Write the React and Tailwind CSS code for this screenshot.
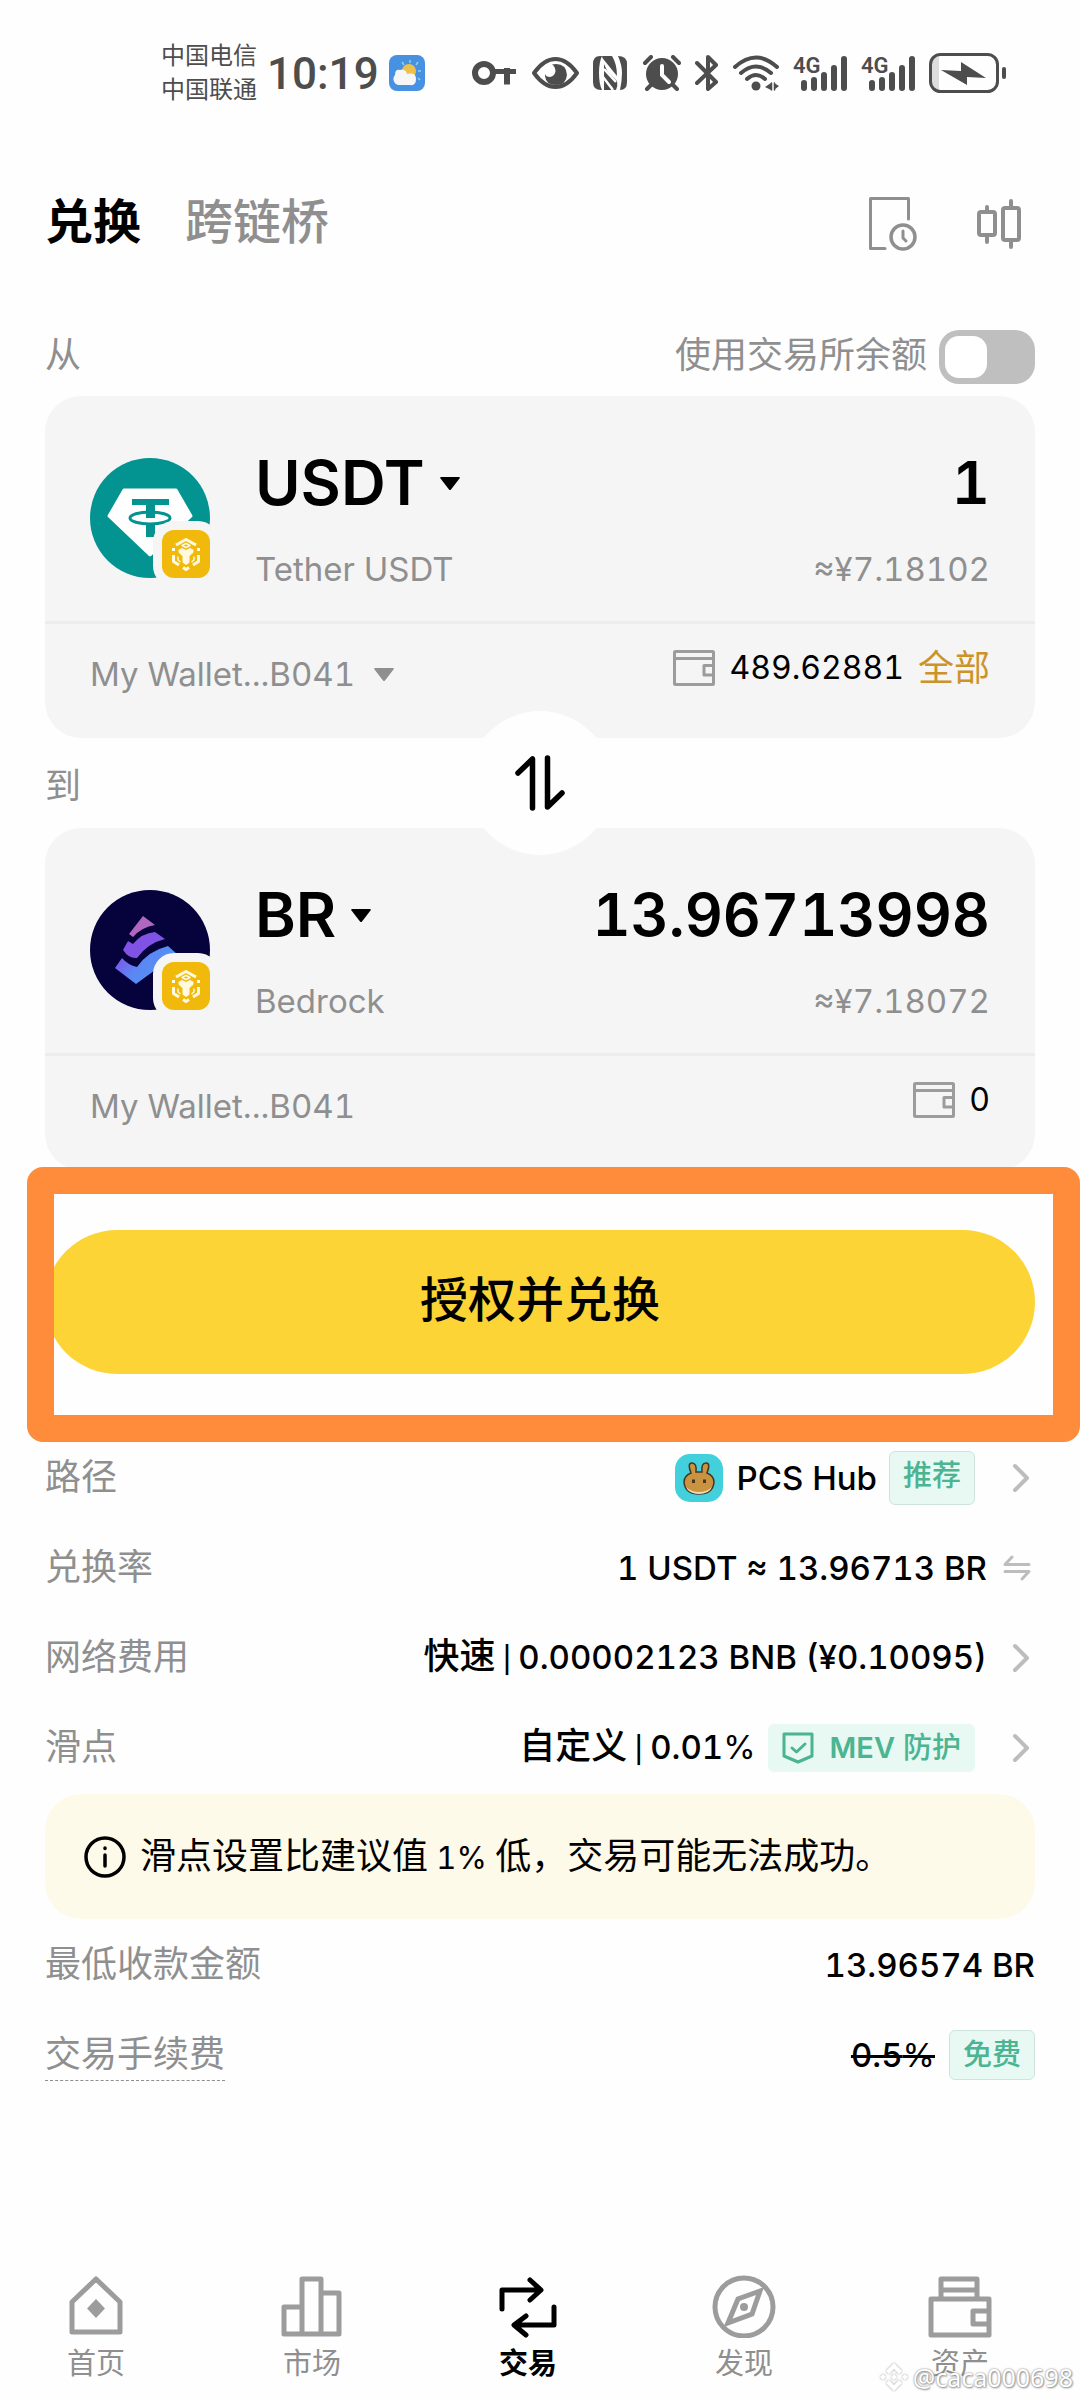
import React, { useState } from "react";

function StatusIcons() {
  return (
    <div className="flex items-center gap-[14px] text-[#4d4d4d]">
      <svg width="46" height="24" viewBox="0 0 46 24" fill="none" stroke="currentColor">
        <circle cx="12" cy="12" r="9" strokeWidth="6" />
        <path d="M23 10.500H44" strokeWidth="5" />
        <path d="M35 10V20.500" strokeWidth="6" strokeLinecap="square" />
      </svg>
      <svg width="47" height="32" viewBox="0 0 47 32">
        <path d="M2 16Q12 2 23.500 2T45 16Q35 30 23.500 30T2 16Z" fill="none" stroke="currentColor" strokeWidth="4" strokeLinejoin="round" />
        <path d="M20 7.500Q34 5 35 18Q34 28 24 28Q14 28 13 19V17Q14 20 18 20Q23 19 23.500 14Q23 9 20 7.500Z" fill="currentColor" />
      </svg>
      <svg width="36" height="34" viewBox="0 0 36 34" fill="currentColor">
        <path d="M7 0H9Q6 6 6 17T9 34H8Q0 34 0 26V8Q0 0 7 0Z" />
        <path d="M9 0H19Q24 8 24 20L11 4Q9 2 9 0Z" />
        <path d="M11 8V34H23Z" />
        <path d="M11 12L24 25Q25 30 23 34L11 20Z" />
        <path d="M11 13L23 26M10 21L20 34" stroke="#fff" strokeWidth="2.500" />
        <path d="M25 0Q34 0 34 8V26Q34 34 27 34Q29 25 29 17T25 0Z" />
      </svg>
      <svg width="38" height="36" viewBox="0 0 38 36" fill="none" stroke="currentColor" strokeLinecap="round">
        <circle cx="19" cy="19" r="16" fill="currentColor" stroke="none" />
        <path d="M2 8L8 2M36 8L30 2M8 30L4 34M30 30L34 34" strokeWidth="4" />
        <path d="M19 11V20L26 27" stroke="#fff" strokeWidth="4" />
      </svg>
      <svg width="24" height="36" viewBox="0 0 24 36" fill="none" stroke="currentColor" strokeWidth="4" strokeLinecap="round" strokeLinejoin="round">
        <path d="M2 8L21 27L13 34V2L21 10L2 28" />
      </svg>
      <svg width="46" height="36" viewBox="0 0 46 36" fill="none" stroke="currentColor" strokeLinecap="round" strokeWidth="4">
        <path d="M2 12Q23 -7 44 12M8 18Q23 5 38 18M14 24Q23 16 32 24" />
        <circle cx="23" cy="31" r="4.500" fill="currentColor" stroke="none" />
        <path d="M38 28V35L32 32ZM41 28V35L46 31Z" fill="currentColor" stroke="none" />
        <path d="M38.500 28V35M41.500 28V35" strokeWidth="1.500" />
      </svg>
      <Signal />
      <Signal />
      <svg width="77" height="40" viewBox="0 0 77 40">
        <path d="M10 3H8Q3 5 3 11V29Q3 35 10 37Z" fill="#ddd" />
        <rect x="1.500" y="1.500" width="67" height="37" rx="10" fill="none" stroke="currentColor" strokeWidth="3" />
        <path d="M12 17L32 18V9L57 25L38 24V32Z" fill="currentColor" />
        <rect x="73" y="14" width="4" height="12" rx="2" fill="currentColor" />
      </svg>
    </div>
  );
}

function Signal() {
  return (
    <svg width="54" height="48" viewBox="0 -6 54 48" fill="none" stroke="currentColor" strokeWidth="6" strokeLinecap="round">
      <text x="0" y="18" fill="currentColor" stroke="none" fontFamily="Roboto, sans-serif" fontSize="22" fontWeight="600">4G</text>
      <path d="M11 28V33M21 25V33M31 20V33M41 13V33M51 4V33" />
    </svg>
  );
}

function Weather() {
  return (
    <svg width="36" height="36" viewBox="0 0 36 36">
      <rect width="36" height="36" rx="8" fill="#4791e3" />
      <path d="M21 5V8M13 7L15 10M29 7L27 10M32 16H29M31 25L29 23" stroke="#8fd0dc" strokeWidth="1.500" />
      <circle cx="20" cy="16" r="7" fill="#edc24b" />
      <path d="M10 30A6 6 0 0 1 6 20Q6 14 11 15A5 5 0 0 1 18 19Q27 17 27 24T21 30Z" fill="#f6f6f6" />
    </svg>
  );
}

function ChainBadge() {
  return (
    <span className="absolute -right-[9px] -bottom-[9px] rounded-[21px] border-[9px] border-[#f5f5f5] bg-[#f5f5f5]">
      <svg width="48" height="48" viewBox="0 0 48 48" fill="none" stroke="#fff9e0" strokeWidth="3" strokeLinejoin="round">
        <rect width="48" height="48" rx="12" fill="#f0b90b" stroke="none" />
        <path d="M14 15L24 9.500L34 15M11.500 18V21M36.500 18V21M11.500 25V31.500L17 35M36.500 25V31.500L31 35M21 37.500L24 39.500L27 37.500" />
        <path d="M20 15.500L24 13.500L28 15.500L24 17.500Z" strokeWidth="1.500" />
        <path d="M17 20L20 18.500L24 20.500L28 18.500L31 20V22.500L27 26V32.500L24 34.500L21 32.500V26L17 22.500Z" fill="#fff9e0" strokeWidth="1" />
        <path d="M16 26.500V30L18.500 32M32 26.500V30L29.500 32" strokeWidth="1.500" />
      </svg>
    </span>
  );
}

function TetherLogo() {
  return (
    <svg width="120" height="120" viewBox="0 0 120 120">
      <circle cx="60" cy="60" r="60" fill="#039391" />
      <path d="M34 32H86L101 58L60 97L19 58Z" fill="#fff" stroke="#fff" strokeWidth="3" strokeLinejoin="round" />
      <path d="M42 41H79V47H65V60H56V47H42ZM56 67H65V79H56Z" fill="#039391" />
      <ellipse cx="60" cy="60" rx="20" ry="6" fill="none" stroke="#039391" strokeWidth="3" />
    </svg>
  );
}

function BedrockLogo() {
  return (
    <svg width="120" height="120" viewBox="0 0 120 120">
      <defs>
        <linearGradient id="layer" x1="0" x2="1" y1="0.3" y2="0.8">
          <stop offset="0" stopColor="#8152e6" />
          <stop offset="0.4" stopColor="#5c86f5" />
          <stop offset="1" stopColor="#4d9bee" />
        </linearGradient>
      </defs>
      <circle cx="60" cy="60" r="60" fill="#05023c" />
      <path d="M53 26L65 35Q52 37 43 47L39 44Z" fill="#b166c0" />
      <path d="M65 42L75 49Q58 53 47 68Q39 69 33 60L38 51L43 54Q52 43 65 42Z" fill="#8152e6" />
      <path d="M78 56L87 64L46 94L25 78L32 68Q38 75 47 77Q58 61 78 56Z" fill="url(#layer)" />
    </svg>
  );
}

function Caret() {
  return (
    <svg width="22" height="15" viewBox="0 0 22 15" fill="currentColor">
      <path d="M2 1H20Q21.500 1 20.500 2.500L12 13.500Q11 14.500 10 13.500L1.500 2.500Q0.500 1 2 1Z" />
    </svg>
  );
}

function WalletIcon() {
  return (
    <svg width="42" height="36" viewBox="0 0 42 36" fill="none" stroke="#9c9c9c" strokeWidth="3" strokeLinejoin="round">
      <rect x="1.500" y="1.500" width="39" height="33" rx="1" />
      <path d="M2 8.500H40M40 15.500H31V25H40" />
    </svg>
  );
}

function Chevron({ label }) {
  return (
    <button aria-label={label} className="flex w-[36px] items-center justify-end pr-[5px] text-[#bdbdbd]">
      <svg width="18" height="30" viewBox="0 0 18 30" fill="none" stroke="currentColor" strokeWidth="4" strokeLinecap="round" strokeLinejoin="round">
        <path d="M3 3L15 15L3 27" />
      </svg>
    </button>
  );
}

function TokenCard({ logo, symbol, name, amount, fiat, wallet, balance }) {
  return (
    <section className="rounded-[36px] bg-[#f5f5f5]">
      <div className="flex h-[225px] items-start px-[45px] pt-[54px]">
        <div className="relative mt-2 shrink-0">
          {logo}
          <ChainBadge />
        </div>
        <div className="ml-[45px]">
          <button className="flex items-center gap-[14px] text-[62px] leading-[66px] font-semibold">
            {symbol}
            <Caret />
          </button>
          <p className="mt-[33px] text-[33px] leading-[40px] text-[#8f8f8f]">{name}</p>
        </div>
        <div className="flex min-w-0 flex-1 flex-col items-end">
          {amount}
          <p className="mt-[33px] text-[33px] leading-[40px] text-[#8f8f8f]">{fiat}</p>
        </div>
      </div>
      <div className="flex h-[117px] items-start justify-between border-t-3 border-[#ededed] px-[45px] pt-[20px]">
        {wallet}
        <div className="flex items-center gap-[14px] text-[32px] leading-[48px]">
          <WalletIcon />
          {balance}
        </div>
      </div>
    </section>
  );
}

function Row({ label, children }) {
  return (
    <div className="flex h-[90px] items-center justify-between">
      <dt className="text-[36px] leading-[50px] text-[#8f8f8f]">{label}</dt>
      <dd className="flex items-center pt-[2px] text-[33px] leading-[50px] font-medium">{children}</dd>
    </div>
  );
}

function NavItem({ label, active, children }) {
  return (
    <a
      href="#"
      aria-current={active ? "page" : undefined}
      className={active ? "flex flex-col items-center gap-2 font-bold text-black" : "flex flex-col items-center gap-2 text-[#8f8f8f]"}
    >
      <svg width="64" height="64" viewBox="0 0 64 64" fill="none" stroke={active ? "#000" : "#9c9c9c"} strokeWidth="5" strokeLinecap="round" strokeLinejoin="round">
        {children}
      </svg>
      <span className="text-[29px] leading-[36px]">{label}</span>
    </a>
  );
}

export default function App() {
  const [amount, setAmount] = useState("1");
  const [useExchange, setUseExchange] = useState(false);

  return (
    <div className="flex min-h-screen flex-col overflow-x-hidden bg-[#fefefe] font-['Inter','Noto_Sans_CJK_SC',sans-serif] text-black tabular-nums">
      <header className="flex h-[146px] items-center pr-[74px] pl-[161px] text-[#4d4d4d]">
        <div className="text-[24px] leading-[34px] whitespace-nowrap">
          <p>中国电信</p>
          <p>中国联通</p>
        </div>
        <time className="ml-[10px] pt-[2px] font-['Roboto',sans-serif] text-[44px] leading-[50px] font-medium">10:19</time>
        <div className="ml-[10px]">
          <Weather />
        </div>
        <div className="ml-auto">
          <StatusIcons />
        </div>
      </header>

      <main>
        <div className="flex h-[150px] items-center px-[45px] pt-[2px]">
          <div role="tablist" className="flex gap-[44px] text-[48px] leading-[60px]">
            <button role="tab" aria-selected="true" className="font-bold">兑换</button>
            <button role="tab" aria-selected="false" className="font-medium text-[#8f8f8f]">跨链桥</button>
          </div>
          <div className="ml-auto flex items-center gap-[60px] pt-[4px] pr-[14px] text-[#8f8f8f]">
            <button aria-label="历史记录">
              <svg width="48" height="54" viewBox="0 0 48 54" fill="none" stroke="currentColor" strokeWidth="3" strokeLinecap="round" strokeLinejoin="round">
                <path d="M16 51.500H1.500V1.500H39.500V22" />
                <circle cx="34" cy="40" r="12" strokeWidth="3.500" />
                <path d="M34 34V41L37 44" />
              </svg>
            </button>
            <button aria-label="行情图">
              <svg width="44" height="50" viewBox="0 0 44 50" fill="none" stroke="currentColor" strokeWidth="4" strokeLinecap="round">
                <rect x="2" y="13" width="16" height="23" rx="2" />
                <rect x="26" y="9" width="16" height="32" rx="2" />
                <path d="M10 8V12M10 37V43M34 2V8M34 42V48" />
              </svg>
            </button>
          </div>
        </div>

        <div className="px-[45px]">
          <div className="flex h-[100px] items-end justify-between pb-3 text-[36px] leading-[58px] text-[#8f8f8f]">
            <span>从</span>
            <label className="flex items-end gap-3">
              使用交易所余额
              <input
                type="checkbox"
                role="switch"
                checked={useExchange}
                onChange={(e) => setUseExchange(e.target.checked)}
                className="h-[54px] w-[96px] appearance-none rounded-[20px] bg-[#bfbfbf] p-[6px] before:block before:h-[42px] before:w-[42px] before:rounded-[14px] before:bg-white checked:bg-[#fdd435] checked:before:ml-[42px]"
              />
            </label>
          </div>

          <TokenCard
            logo={<TetherLogo />}
            symbol="USDT"
            name="Tether USDT"
            amount={
              <input
                aria-label="支付数量"
                value={amount}
                onChange={(e) => setAmount(e.target.value)}
                className="h-[66px] w-full bg-transparent text-right text-[59px] leading-[66px] font-semibold outline-none"
              />
            }
            fiat="≈¥7.18102"
            wallet={
              <button className="mt-[6px] flex items-center gap-[18px] text-[33px] leading-[48px] text-[#8f8f8f]">
                My Wallet...B041
                <Caret />
              </button>
            }
            balance={
              <>
                <span>489.62881</span>
                <button className="text-[36px] text-[#cc932b]">全部</button>
              </>
            }
          />

          <div className="relative flex h-[90px] items-center pt-[6px] text-[36px] leading-[50px] text-[#8f8f8f]">
            到
            <button aria-label="交换方向" className="absolute top-1/2 left-1/2 flex h-[144px] w-[144px] -translate-x-1/2 -translate-y-1/2 items-center justify-center rounded-full bg-[#fefefe] text-black">
              <svg width="50" height="56" viewBox="0 0 50 56" fill="none" stroke="currentColor" strokeWidth="5.500" strokeLinecap="round" strokeLinejoin="round">
                <path d="M3 18L17.500 4V53M32.500 3V52L47 38" />
              </svg>
            </button>
          </div>

          <TokenCard
            logo={<BedrockLogo />}
            symbol="BR"
            name="Bedrock"
            amount={<output className="text-[59px] leading-[66px] font-semibold">13.96713998</output>}
            fiat="≈¥7.18072"
            wallet={<span className="mt-[6px] text-[33px] leading-[48px] text-[#8f8f8f]">My Wallet...B041</span>}
            balance={<span>0</span>}
          />
        </div>

        <div className="relative px-[45px] pt-[60px] pb-[58px]">
          <button className="h-[144px] w-full rounded-full bg-[#fdd435] pb-1 text-[48px] leading-[60px] font-medium">授权并兑换</button>
          <div className="pointer-events-none absolute -top-[3px] right-0 -bottom-[10px] left-[27px] rounded-[16px] border-[27px] border-[#ff8c3a]" />
        </div>

        <dl className="px-[45px]">
          <Row label="路径">
            <svg width="48" height="48" viewBox="0 0 48 48">
              <rect width="48" height="48" rx="15" fill="#41d0dc" />
              <g fill="#c9933f" stroke="#4a3522" strokeWidth="1.500">
                <path d="M16 19Q12 9 17 9Q22 9 21 18H27Q26 9 31 9Q36 9 32 19Q39 22 39 28Q38 40 24 40T9 28Q9 22 16 19Z" />
                <path d="M11 33Q14 40 24 40T37 33Q32 38 24 38T11 33Z" fill="#f4d9b0" stroke="none" />
                <path d="M18.500 25.500V29M29.500 25.500V29" strokeWidth="3" />
              </g>
            </svg>
            <span className="ml-[14px]">PCS Hub</span>
            <span className="mr-[24px] ml-3 rounded-[6px] border border-[#cfe3dc] bg-[#e8f8f3] px-[13px] pb-[4px] text-[29px] leading-[48px] text-[#4bb491]">推荐</span>
            <Chevron label="选择路径" />
          </Row>
          <Row label="兑换率">
            <span>1 USDT ≈ 13.96713 BR</span>
            <button aria-label="反转汇率" className="ml-[16px] pr-1">
              <svg width="28" height="26" viewBox="0 0 28 26" fill="none" stroke="#bdbdbd" strokeWidth="3" strokeLinecap="round" strokeLinejoin="round">
                <path d="M26 9.500H2L9 2M2 16.500H26L19 24" />
              </svg>
            </button>
          </Row>
          <Row label="网络费用">
            <span className="mr-[12px]"><span className="text-[36px]">快速</span><span className="text-[26px]"> | </span>0.00002123 BNB (¥0.10095)</span>
            <Chevron label="设置网络费用" />
          </Row>
          <Row label="滑点">
            <span><span className="text-[36px]">自定义</span><span className="text-[26px]"> | </span>0.01<span className="font-normal">%</span></span>
            <span className="mr-[24px] ml-3 flex items-center rounded-[6px] bg-[#e8f8f3] px-[14px] text-[29px] leading-[48px] text-[#4bb491]">
              <svg className="mr-4" width="32" height="32" viewBox="0 0 32 32" fill="none" stroke="currentColor" strokeWidth="3" strokeLinejoin="round" strokeLinecap="round">
                <path d="M2 2H30V24L16 30L2 24ZM10 16L14.500 20L23 12" />
              </svg>
              <span className="font-semibold">MEV</span>
              <span className="ml-2">防护</span>
            </span>
            <Chevron label="设置滑点" />
          </Row>
          <div role="alert" className="mt-[2px] flex h-[125px] items-center rounded-[36px] bg-[#fefae9] px-[39px] text-[36px] leading-[50px]">
            <svg className="mr-[14px] shrink-0" width="42" height="42" viewBox="0 0 42 42" fill="none" stroke="currentColor" strokeWidth="3.500" strokeLinecap="round">
              <circle cx="21" cy="21" r="19" />
              <path d="M21 19V30M21 12V12.500" />
            </svg>
            <p>滑点设置比建议值<span className="text-[31px]"> 1% </span>低，交易可能无法成功。</p>
          </div>
          <Row label="最低收款金额">13.96574 BR</Row>
          <Row label={<span className="border-b border-dashed border-[#8f8f8f] pb-1">交易手续费</span>}>
            <s>0.5<span className="font-normal">%</span></s>
            <span className="ml-[14px] rounded-[6px] border border-[#cfe3dc] bg-[#e8f8f3] px-[13px] text-[29px] leading-[48px] text-[#4bb491]">免费</span>
          </Row>
        </dl>
      </main>

      <nav className="relative mt-auto grid grid-cols-5 gap-6 pr-6 pb-[18px]">
        <NavItem label="首页">
          <path d="M8 28L32 5L56 28V58H8Z" />
          <path d="M32 25L41 34.500L32 44L23 34.500Z" fill="#9c9c9c" stroke="none" />
        </NavItem>
        <NavItem label="市场">
          <path d="M4 33H22V60H4ZM22 5H41V60H22ZM41 19H59V60H41Z" />
        </NavItem>
        <NavItem label="交易" active>
          <path d="M6 35V16H44M34 6L45 16L34 26M58 33V51H20M30 42L18 51L30 61" />
        </NavItem>
        <NavItem label="发现">
          <circle cx="32" cy="33" r="29" />
          <path d="M48 17L26 25L16 49L40 40Z" strokeLinejoin="miter" />
          <circle cx="32" cy="33" r="4" fill="#9c9c9c" stroke="none" />
        </NavItem>
        <NavItem label="资产">
          <path d="M3 25H61V61H3ZM13 24V5H49V24M14 16H49M60 37H45V50H60" />
        </NavItem>
        <div className="absolute right-[7px] bottom-[5px] flex items-center gap-1 font-['Noto_Sans',sans-serif] text-[25px] leading-[36px] text-white [text-shadow:0_0_2px_#777,1px_1px_2px_#999]">
          <svg className="drop-shadow-[0_0_1px_#999]" width="30" height="30" viewBox="0 0 30 30" fill="#fff">
            <path d="M15 1L23 9L20 12L15 7L10 12L7 9ZM15 29L7 21L10 18L15 23L20 18L23 21ZM4 12L7 15L4 18L1 15ZM26 12L29 15L26 18L23 15ZM15 12L18 15L15 18L12 15Z" />
          </svg>
          <span>@caca000698</span>
        </div>
      </nav>
    </div>
  );
}
